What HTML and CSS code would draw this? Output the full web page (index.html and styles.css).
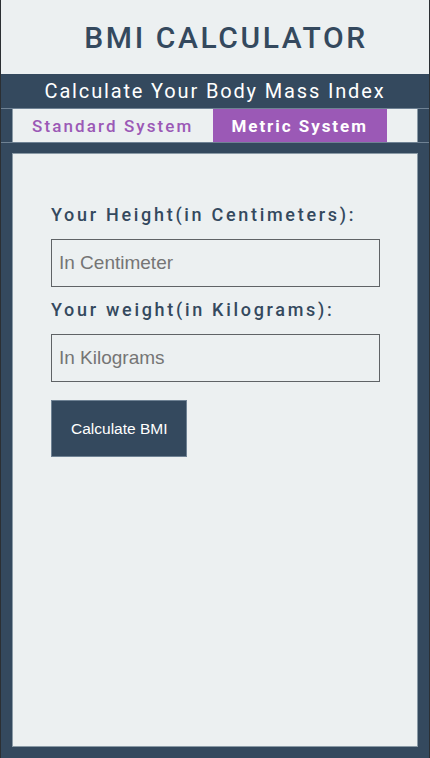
FILE: index.html
```html
<!DOCTYPE html>
<html lang="en">
<head>
<meta charset="utf-8">
<title>BMI Calculator</title>
<link rel="stylesheet" href="styles.css">
</head>
<body>
<div class="page">
  <header class="top">
    <h1 class="title">BMI CALCULATOR</h1>
  </header>
  <div class="subhead">Calculate Your Body Mass Index</div>
  <nav class="tabrow">
    <ul class="tabs">
      <li class="tab">Standard System</li>
      <li class="tab active">Metric System</li>
    </ul>
  </nav>
  <main class="card">
    <form class="form">
      <label class="label" for="h">Your Height(in Centimeters):</label>
      <input class="field" id="h" type="text" placeholder="In Centimeter">
      <label class="label" for="w">Your weight(in Kilograms):</label>
      <input class="field" id="w" type="text" placeholder="In Kilograms">
      <button class="btn" type="button">Calculate BMI</button>
    </form>
  </main>
</div>
</body>
</html>
```

FILE: styles.css
```css
* { box-sizing: border-box; }
html, body { margin: 0; padding: 0; }
body {
  background: #34495e;
  font-family: Roboto, "Liberation Sans", sans-serif;
}
.page {
  min-height: 100vh;
  display: flex;
  flex-direction: column;
  background: #34495e;
  border-left: 1px solid #2b2f33;
  border-right: 1px solid #2b2f33;
}
.top {
  height: 74px;
  background: #ecf0f1;
  display: flex;
  align-items: center;
  justify-content: center;
  padding-left: 22px;
}
.title {
  margin: 0;
  font-size: 30px;
  font-weight: 500;
  letter-spacing: 2.6px;
  color: #34495e;
}
.subhead {
  height: 34px;
  line-height: 34px;
  text-align: center;
  color: #ffffff;
  font-size: 20px;
  letter-spacing: 1.85px;
}
.tabrow {
  border-top: 1px solid #6f8294;
  border-bottom: 1px solid #6f8294;
  padding: 0 11px;
}
.tabs {
  margin: 0;
  padding: 0;
  list-style: none;
  display: flex;
  background: #ecf0f1;
  border-left: 1px solid #8a9aa6;
  border-right: 1px solid #8a9aa6;
}
.tab {
  height: 33px;
  line-height: 35px;
  padding: 0 20px 0 19px;
  font-size: 17px;
  font-weight: 500;
  letter-spacing: 2.1px;
  color: #9b59b6;
}
.tab.active {
  background: #9b59b6;
  color: #ffffff;
  font-weight: 700;
  padding: 0 19px 0 18px;
  letter-spacing: 1.95px;
}
.card {
  flex: 1;
  margin: 10px 11px 11px;
  background: #ecf0f1;
  border: 1px solid #8a9aa6;
  padding: 50px 37px 0 38px;
}
.form {
  display: flex;
  flex-direction: column;
  align-items: flex-start;
}
.label {
  display: block;
  font-size: 18px;
  font-weight: 500;
  letter-spacing: 2.7px;
  color: #34495e;
  margin-bottom: 14px;
}
.field {
  width: 100%;
  height: 48px;
  margin: 0 0 12px;
  padding: 0 7px;
  border: 1px solid #5f6366;
  background: transparent;
  font-family: "Liberation Sans", Arial, sans-serif;
  font-size: 19px;
  color: #333;
  outline: none;
}
.field::placeholder { color: #757575; }
.btn {
  margin-top: 6px;
  padding: 19px;
  height: 57px;
  background: #34495e;
  border: 1px solid #6f8294;
  color: #ffffff;
  font-family: "Liberation Sans", Arial, sans-serif;
  font-size: 15.5px;
  cursor: pointer;
}
```
